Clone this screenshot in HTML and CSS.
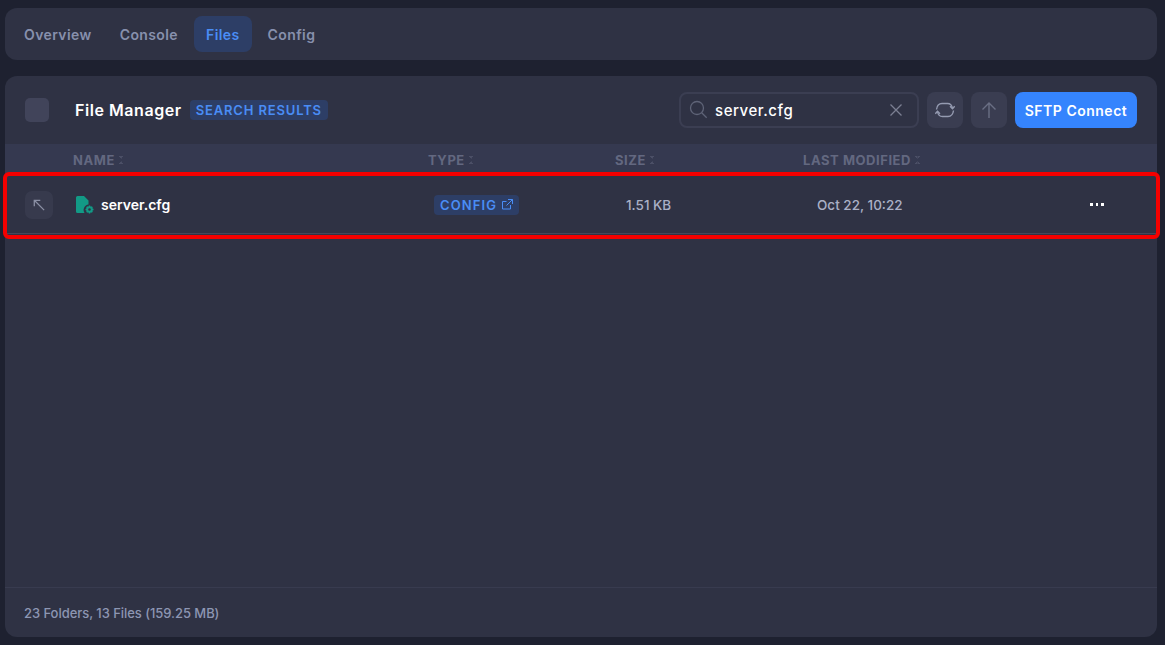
FILE: index.html
```html
<!DOCTYPE html>
<html lang="en">
<head>
<meta charset="utf-8">
<title>File Manager</title>
<link rel="stylesheet" href="styles.css">
</head>
<body>
<nav class="tabs">
  <a class="tab">Overview</a>
  <a class="tab">Console</a>
  <a class="tab active">Files</a>
  <a class="tab">Config</a>
</nav>
<main class="panel">
  <header class="head">
    <span class="check"></span>
    <h1 class="title">File Manager</h1>
    <span class="badge">SEARCH RESULTS</span>
    <div class="tools">
      <div class="search">
        <svg class="search-icon" width="20" height="20" viewBox="0 0 20 20" fill="none" stroke="#5f6478" stroke-width="1.3"><circle cx="8" cy="8" r="6.5"/><path d="M12.700 12.700l5 5"/></svg>
        <span class="search-text">server.cfg</span>
        <svg width="14" height="14" viewBox="0 0 14 14" fill="none" stroke="#7b7f92" stroke-width="1.3"><path d="M1.500 1.500l11 11M12.500 1.500l-11 11"/></svg>
      </div>
      <button class="icon-btn">
        <svg width="20" height="20" viewBox="0 0 20 20" fill="none" stroke="#959bb1" stroke-width="1.4"><path d="M1.500 9.500C2 5.500 4 3.500 7 3.500h5.500c2.500 0 4.500 2 5 5"/><path d="M15 6.300l2.500 2.500 2.200-2.500"/><path d="M18.500 10.500c-.5 4-2.500 6-5.500 6H7.500c-2.500 0-4.500-2-5-5"/><path d="M5 13.700l-2.500-2.500-2.200 2.500"/></svg>
      </button>
      <button class="icon-btn dim">
        <svg width="18" height="20" viewBox="0 0 18 20" fill="none" stroke="#6a6f84" stroke-width="1.4"><path d="M9 18V3M2.500 9.500L9 3l6.500 6.500"/></svg>
      </button>
      <button class="primary">SFTP Connect</button>
    </div>
  </header>
  <div class="cols">
    <span class="th th-name">NAME<i class="sort"></i></span>
    <span class="th th-type">TYPE<i class="sort"></i></span>
    <span class="th th-size">SIZE<i class="sort"></i></span>
    <span class="th th-date">LAST MODIFIED<i class="sort"></i></span>
  </div>
  <div class="row">
    <span class="up">
      <svg width="12" height="12" viewBox="0 0 14 14" fill="none" stroke="#8b90a5" stroke-width="1.5"><path d="M13 13L1.500 1.500M1.500 8.500v-7h7"/></svg>
    </span>
    <span class="cell-name">
      <svg class="file" width="18" height="18" viewBox="0 0 18 18"><path fill="#129a86" d="M1.500 0H8l4.500 4.500v4A5.500 5.500 0 0 0 8.500 17H1.500A1.500 1.500 0 0 1 0 15.500v-14A1.500 1.500 0 0 1 1.500 0z"/><circle cx="13.500" cy="13.500" r="2.300" fill="none" stroke="#129a86" stroke-width="2"/><path stroke="#129a86" stroke-width="1.500" d="M13.500 9.500v2M13.500 15.500v2M9.500 13.500h2M15.500 13.500h2M10.700 10.700l1.400 1.400M14.900 14.900l1.400 1.400M16.300 10.700l-1.400 1.400M12.100 14.900l-1.400 1.400"/></svg>
      server.cfg
    </span>
    <span class="cell-type"><span class="tag">CONFIG
      <svg width="11" height="11" viewBox="0 0 11 11" fill="none" stroke="#4a8df5" stroke-width="1"><path d="M8.500 6v4h-8V2.500h4M6 .5h4.500V5M10.500 .5L4.500 6.500"/></svg>
    </span></span>
    <span class="cell-size">1.51 KB</span>
    <span class="cell-date">Oct 22, 10:22</span>
    <span class="more"><i></i><i></i><i></i></span>
    <span class="highlight"></span>
  </div>
  <div class="spacer"></div>
  <footer class="foot">23 Folders, 13 Files (159.25 MB)</footer>
</main>
</body>
</html>
```
FILE: styles.css
```css
* { box-sizing: border-box; }
html, body { height: 100%; }
body {
  margin: 0;
  padding: 8px 8px 8px 5px;
  background: #1e2130;
  font-family: Inter, "Open Sans", sans-serif;
  display: flex;
  flex-direction: column;
  gap: 16px;
  overflow: hidden;
}
.tabs {
  height: 52px;
  flex: none;
  background: #2f3244;
  border-radius: 12px;
  display: flex;
  align-items: center;
  padding: 0 7px;
  gap: 4px;
}
.tab {
  height: 36px;
  padding: 0 12px;
  display: flex;
  align-items: center;
  border-radius: 8px;
  font-size: 14px;
  font-weight: 600;
  letter-spacing: .4px;
  color: #8790ad;
}
.tab.active { background: #2d3e66; color: #4a8df5; }
.panel {
  flex: 1;
  min-height: 0;
  background: #2f3244;
  border-radius: 12px;
  display: flex;
  flex-direction: column;
}
.head {
  height: 68px;
  flex: none;
  display: flex;
  align-items: center;
  padding: 0 20px;
}
.check {
  width: 24px;
  height: 24px;
  background: #41445a;
  border-radius: 5px;
  margin-right: 26px;
}
.title {
  margin: 0 8px 0 0;
  font-size: 16px;
  font-weight: 600;
  letter-spacing: .55px;
  color: #fff;
}
.badge {
  background: #2d3e66;
  color: #4a8df5;
  border-radius: 4px;
  font-size: 13px;
  font-weight: 600;
  letter-spacing: .85px;
  padding: 0 6px;
  height: 20px;
  display: flex;
  align-items: center;
}
.tools {
  margin-left: auto;
  display: flex;
  align-items: center;
  gap: 8px;
}
.search {
  width: 240px;
  height: 36px;
  border: 2px solid #3b3e52;
  border-radius: 8px;
  display: flex;
  align-items: center;
  padding: 0 14px 0 8px;
}
.search-text {
  flex: 1;
  margin-left: 6px;
  color: #fff;
  font-size: 15px;
  font-weight: 500;
  letter-spacing: .55px;
}
.icon-btn {
  width: 36px;
  height: 36px;
  border: 0;
  padding: 0;
  border-radius: 8px;
  background: #3a3d51;
  display: flex;
  align-items: center;
  justify-content: center;
}
.primary {
  height: 36px;
  width: 122px;
  border: 0;
  padding: 0;
  border-radius: 8px;
  background: #3584fd;
  color: #fff;
  font-family: inherit;
  font-size: 14px;
  font-weight: 600;
  letter-spacing: .5px;
}
.cols {
  height: 32px;
  flex: none;
  background: #353950;
  display: grid;
  grid-template-columns: 68px 355px 187px 188px 1fr;
  align-items: center;
}
.th {
  font-size: 13px;
  font-weight: 700;
  letter-spacing: .55px;
  color: #636880;
  display: flex;
  align-items: center;
  gap: 4px;
}
.th-name { grid-column: 2; }
.sort {
  width: 5px;
  height: 8px;
  background:
    linear-gradient(45deg, transparent 50%, #4b4f66 50%) 0 0 / 2.500px 3px no-repeat,
    linear-gradient(-45deg, transparent 50%, #4b4f66 50%) 100% 0 / 2.500px 3px no-repeat,
    linear-gradient(135deg, transparent 50%, #4b4f66 50%) 0 100% / 2.500px 3px no-repeat,
    linear-gradient(-135deg, transparent 50%, #4b4f66 50%) 100% 100% / 2.500px 3px no-repeat;
}
.row {
  height: 58px;
  flex: none;
  position: relative;
  display: grid;
  grid-template-columns: 429px 192px 191px 1fr 67px;
  align-items: center;
  border-bottom: 1px solid #44475c;
}
.up {
  position: absolute;
  left: 20px;
  top: 15px;
  width: 28px;
  height: 28px;
  border-radius: 7px;
  background: #373a4d;
  display: flex;
  align-items: center;
  justify-content: center;
}
.cell-name {
  padding-left: 71px;
  display: flex;
  align-items: center;
  gap: 7px;
  color: #fff;
  font-size: 14px;
  font-weight: 600;
}
.cell-type { display: flex; }
.tag {
  display: flex;
  align-items: center;
  gap: 5px;
  height: 20px;
  padding: 0 6px;
  background: #2d3e66;
  color: #4a8df5;
  border-radius: 4px;
  font-size: 13px;
  font-weight: 600;
  letter-spacing: 1.1px;
}
.cell-size, .cell-date { color: #aab0c6; font-size: 13.500px; font-weight: 500; }
.more { display: flex; gap: 3px; }
.more i { width: 2.500px; height: 2.500px; background: #fff; }
.highlight {
  position: absolute;
  left: -2px;
  right: -3px;
  top: -4px;
  bottom: -6px;
  border: 4px solid #f40000;
  border-radius: 6px;
  pointer-events: none;
}
.spacer { flex: 1; }
.foot {
  height: 50px;
  flex: none;
  border-top: 1px solid #383b4f;
  display: flex;
  align-items: center;
  padding-left: 19px;
  color: #8d96b3;
  font-size: 13px;
  font-weight: 500;
  letter-spacing: -.05px;
}
```
